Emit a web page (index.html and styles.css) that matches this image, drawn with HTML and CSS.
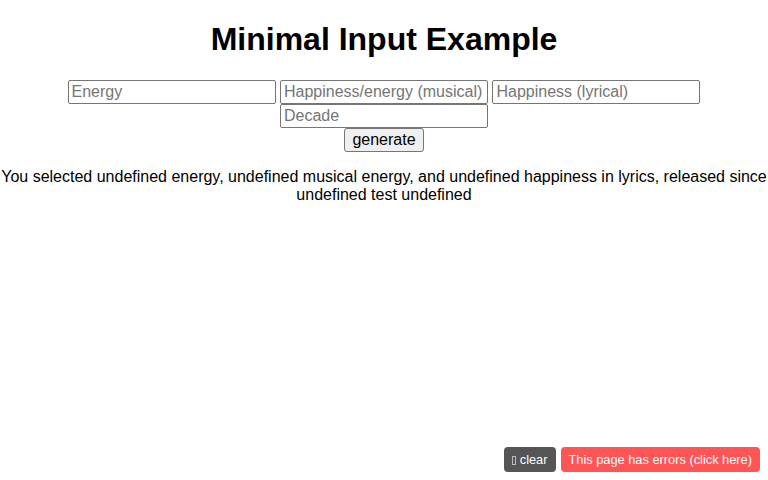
FILE: index.html
```
<!DOCTYPE html>
<html lang="en">
<head>
<meta charset="utf-8">
<title>Minimal Input Example</title>
<link rel="stylesheet" href="styles.css">
</head>
<body>
<div class="app">
<h1 class="title">Minimal Input Example</h1>
<form class="controls">
<input class="field" placeholder="Energy">
<input class="field" placeholder="Happiness/energy (musical)">
<input class="field" placeholder="Happiness (lyrical)">
<input class="field" placeholder="Decade">
<br>
<button class="generate" type="button">generate</button>
</form>
<p class="summary">You selected undefined energy, undefined musical energy, and undefined happiness in lyrics, released since undefined test undefined</p>
</div>
<div class="dev-bar">
<button class="dev-btn dev-clear" type="button"><span class="tofu"></span> clear</button>
<button class="dev-btn dev-errors" type="button">This page has errors (click here)</button>
</div>
</body>
</html>
```
FILE: styles.css
```
html, body { margin: 0; padding: 0; }
body { font-family: "Liberation Sans", Arial, sans-serif; color: #000; background: #fff; height: 480px; overflow: hidden; }
.app { text-align: center; }
.title { font-size: 32px; font-weight: 700; line-height: 37px; margin: 0; padding-top: 21px; }
.controls { margin-top: 22px; line-height: 24px; font-size: 16px; }
.field { font: 16px "Liberation Sans", Arial, sans-serif; width: 208px; height: 24px; box-sizing: border-box; padding: 1px 3px; border: 1px solid #767676; border-radius: 2px; margin: 0; vertical-align: top; }
.generate { font: 16px "Liberation Sans", Arial, sans-serif; width: 80px; height: 24px; box-sizing: border-box; padding: 1px 6px; border: 1px solid #767676; border-radius: 3px; background: #efefef; color: #000; vertical-align: top; }
.summary { font-size: 16px; line-height: 18px; margin: 16px 0 0; }
.dev-bar { position: fixed; right: 8px; bottom: 8px; display: flex; gap: 5px; }
.dev-btn { font: 12.8px "Liberation Sans", Arial, sans-serif; border: 0; border-radius: 4px; height: 25px; padding: 0 8px; color: #fff; }
.dev-clear { background: #555; }
.dev-errors { background: #f55; }
.tofu { display: inline-block; width: 4px; height: 9px; box-sizing: border-box; border: 1px solid #bbb; vertical-align: -1px; }
```
